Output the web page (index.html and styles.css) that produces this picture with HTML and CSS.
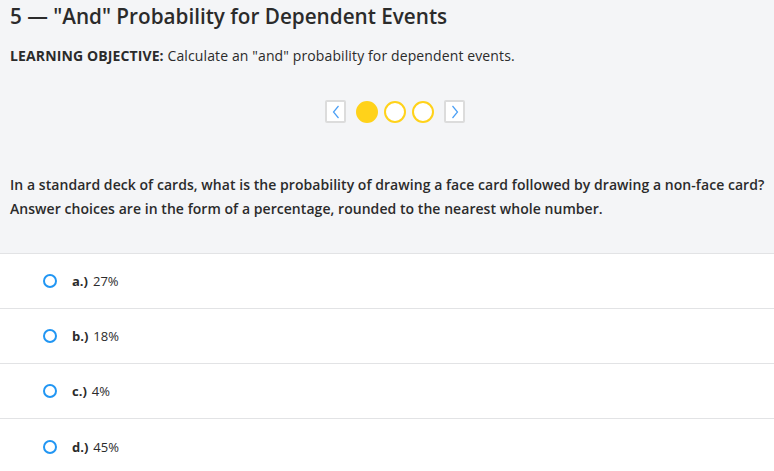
FILE: index.html
```html
<!DOCTYPE html>
<html lang="en">
<head>
<meta charset="utf-8">
<link rel="stylesheet" href="styles.css">
</head>
<body>
<div class="header">
  <h1 class="title">5 — "And" Probability for Dependent Events</h1>
  <p class="objective"><strong>LEARNING OBJECTIVE:</strong> Calculate an "and" probability for dependent events.</p>
  <div class="pager">
    <button class="nav-btn" aria-label="Previous">
      <svg width="10" height="14" viewBox="0 0 10 14"><path d="M7.5 1 L2.5 7 L7.5 13" fill="none" stroke="#4a9ff5" stroke-width="1.2"/></svg>
    </button>
    <span class="dot dot-active"></span>
    <span class="dot"></span>
    <span class="dot"></span>
    <button class="nav-btn" aria-label="Next">
      <svg width="10" height="14" viewBox="0 0 10 14"><path d="M2.5 1 L7.5 7 L2.5 13" fill="none" stroke="#4a9ff5" stroke-width="1.2"/></svg>
    </button>
  </div>
  <p class="question">In a standard deck of cards, what is the probability of drawing a face card followed by drawing a non-face card? Answer choices are in the form of a percentage, rounded to the nearest whole number.</p>
</div>
<ul class="options">
  <li class="option"><span class="radio"></span><span class="letter">a.)</span><span class="value">27%</span></li>
  <li class="option"><span class="radio"></span><span class="letter">b.)</span><span class="value">18%</span></li>
  <li class="option"><span class="radio"></span><span class="letter">c.)</span><span class="value">4%</span></li>
  <li class="option"><span class="radio"></span><span class="letter">d.)</span><span class="value">45%</span></li>
</ul>
</body>
</html>
```
FILE: styles.css
```css
* { box-sizing: border-box; }
html, body { margin: 0; padding: 0; background: #fff; }
body {
  font-family: "Open Sans", "Liberation Sans", sans-serif;
  color: #2b2b2b;
}
.header {
  background: #f4f5f7;
  padding: 3px 4px 0 10px;
  height: 254px;
  border-bottom: 1px solid #e2e3e5;
}
.title {
  margin: 0;
  font-size: 20.7px;
  line-height: 26px;
  font-weight: 600;
  color: #2b2b2b;
}
.objective {
  margin: 17px 0 0;
  font-size: 14px;
  line-height: 20px;
  letter-spacing: 0.12px;
  color: #2b2b2b;
}
.objective strong { font-weight: 700; }
.pager {
  display: flex;
  justify-content: center;
  align-items: center;
  gap: 6px;
  margin-top: 34px;
  padding-left: 10px;
}
.nav-btn {
  width: 21px;
  height: 23px;
  padding: 0;
  border: 2px solid #dcdcdc;
  border-radius: 2px;
  background: #fff;
  display: flex;
  align-items: center;
  justify-content: center;
  margin: 0 4px;
}
.dot {
  width: 22px;
  height: 22px;
  border-radius: 50%;
  border: 2.5px solid #ffd21a;
  background: #fff;
}
.dot-active { background: #ffd21a; }
.question {
  margin: 50px 0 0;
  font-size: 14px;
  line-height: 24px;
  letter-spacing: 0.05px;
  font-weight: 600;
  color: #2b2b2b;
}
.options { list-style: none; margin: 0; padding: 0; }
.option {
  display: flex;
  align-items: center;
  height: 55px;
  padding-left: 43px;
  border-bottom: 1px solid #e2e3e5;
  font-size: 13px;
}
.option:last-child { border-bottom: none; }
.radio {
  width: 14px;
  height: 14px;
  border-radius: 50%;
  border: 2px solid #2196f3;
  margin-right: 15px;
}
.letter { font-weight: 700; margin-right: 5px; }
```
